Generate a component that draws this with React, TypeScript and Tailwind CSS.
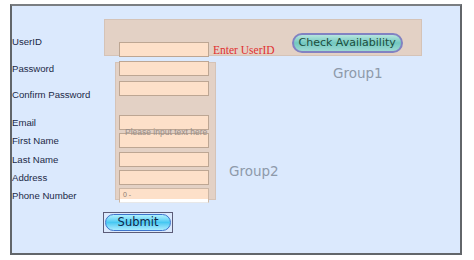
import React from 'react';

const label = 'w-[107px] shrink-0 text-[9.6px] leading-[12px] text-[#1c2a48] font-["Liberation_Sans",Arial,sans-serif]';
const field = 'w-[90px] h-[15px] shrink-0 bg-[#fde0c9] border border-[#bda693]';

const rows = [
  { name: 'Password', gap: 'mt-[4px]' },
  { name: 'Confirm Password', gap: 'mt-[5px]', shift: 'mt-[13px]' },
  { name: 'Email', gap: 'mt-[19px]' },
  { name: 'First Name', gap: 'mt-[3px]' },
  { name: 'Last Name', gap: 'mt-[4px]' },
  { name: 'Address', gap: 'mt-[3px]' },
];

export default function App() {
  return (
    <div className="w-[474px] h-[260px] bg-white overflow-hidden pt-[4px] pl-[10px]">
      <div className="relative w-[452px] h-[251px] border-2 border-[#62666a] border-t-[#7a7e82] bg-[#dbe9fd]">
        {/* group frames, as drawn in the form designer */}
        <div className="absolute left-[92px] top-[13px] w-[318px] h-[37px] bg-[#e3d1c5] border border-[#d5c3b7]" />
        <div className="absolute left-[103px] top-[56px] w-[101px] h-[138px] bg-[#e3d1c5] border border-[#d5c3b7]" />
        <span className="absolute left-[321px] top-[60px] text-[13.5px] leading-[14px] text-[#8e9aaa] font-['DejaVu_Sans',sans-serif]">Group1</span>
        <span className="absolute left-[217px] top-[158px] text-[13.5px] leading-[14px] text-[#8e9aaa] font-['DejaVu_Sans',sans-serif]">Group2</span>

        <div className="relative z-10 pt-[36px]">
          <div className="flex items-center h-[15px]">
            <span className={label + ' mb-[16px]'}>UserID</span>
            <div className={field} />
            <span className="ml-[4px] text-[11.5px] leading-[12px] text-[#e03030] font-['Liberation_Serif',serif]">Enter UserID</span>
            <button className="ml-[17px] mb-[14px] w-[111px] h-[20px] shrink-0 rounded-full border-2 border-[#8282c2] bg-gradient-to-b from-[#b6e6de] via-[#72c8c0] to-[#9cdad2] text-[11px] leading-none text-[#1d4d3c] font-['DejaVu_Sans',sans-serif]">
              Check Availability
            </button>
          </div>

          {rows.map(r => (
            <div key={r.name} className={'flex items-center h-[15px] ' + r.gap}>
              <span className={label + (r.shift ? ' ' + r.shift : '')}>{r.name}</span>
              <div className={field} />
            </div>
          ))}

          <div className="flex items-center h-[15px] mt-[3px]">
            <span className={label}>Phone Number</span>
            <div className="w-[90px] h-[15px] shrink-0 border border-[#cdb7a5] border-b-[#e8e8e8] bg-[linear-gradient(#fde0c9_78%,#ffffff_78%)] pl-[3px] text-[7px] leading-[12px] text-[#8a7a70] font-['Liberation_Sans',sans-serif]">
              0 -
            </div>
          </div>

          <div className="ml-[91px] mt-[9px] w-[70px] h-[21px] border border-[#5c5c78] p-px">
            <button className="block w-full h-full rounded-full border border-[#3d74cc] bg-gradient-to-b from-[#aef2ff] via-[#46c8f2] to-[#a8ecff] text-[11.5px] leading-none text-[#10284a] font-['DejaVu_Sans',sans-serif]">
              Submit
            </button>
          </div>

          <span className="absolute left-[113px] top-[121px] text-[8.5px] leading-[10px] text-[#9a8e88] font-['Liberation_Sans',sans-serif]">
            Please input text here
          </span>
        </div>
      </div>
    </div>
  );
}
